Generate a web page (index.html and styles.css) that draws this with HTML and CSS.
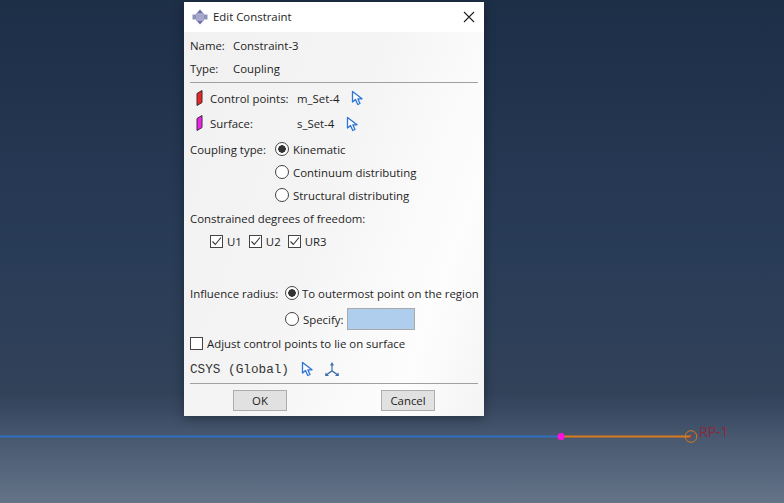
FILE: index.html
```html
<!DOCTYPE html>
<html lang="en">
<head>
<meta charset="utf-8">
<title>Edit Constraint</title>
<link rel="stylesheet" href="styles.css">
</head>
<body>
<main class="viewport">
  <svg class="model" width="784" height="503" viewBox="0 0 784 503" aria-hidden="true">
    <line x1="0" y1="436.500" x2="561" y2="436.500" stroke="#2f6fc0" stroke-width="2"/>
    <line x1="561" y1="436.500" x2="691" y2="436.500" stroke="#d87a1e" stroke-width="2"/>
    <circle cx="561" cy="436.500" r="3.500" fill="#ff10e0"/>
    <circle cx="691" cy="436.500" r="5.800" fill="none" stroke="#d87a1e" stroke-width="1"/>
    <line x1="687" y1="440" x2="695" y2="433" stroke="#b03030" stroke-width="1"/>
  </svg>
  <span class="rp-label">RP-1</span>

  <section class="dialog">
    <header class="titlebar">
      <svg class="app-icon" width="16" height="16" viewBox="0 0 16 16" aria-hidden="true">
        <path d="M8 .5 11.500 4.500H4.500Z" fill="#6f6fa8"/>
        <path d="M8 15.500 4.500 11.500H11.500Z" fill="#6f6fa8"/>
        <rect x=".5" y="5.500" width="15" height="5" fill="#8d93b8"/>
        <rect x="4" y="4" width="8" height="8" fill="#a4a6cc"/>
      </svg>
      <span class="title">Edit Constraint</span>
      <svg class="close" width="12" height="12" viewBox="0 0 12 12" aria-hidden="true">
        <path d="M1 1 11 11M11 1 1 11" stroke="#222" stroke-width="1.100" fill="none"/>
      </svg>
    </header>

    <div class="body">
      <div class="row name-row"><span class="key">Name:</span><span>Constraint-3</span></div>
      <div class="row type-row"><span class="key">Type:</span><span>Coupling</span></div>
      <hr class="rule">

      <div class="row region-row">
        <svg class="swatch" width="8" height="16" viewBox="0 0 8 16" aria-hidden="true"><path d="M2 3.500 7 .5V12.500L2 15.500Z" fill="#e8262a" stroke="#3c2a2a"/></svg>
        <span class="region-key">Control points:</span><span class="region-value">m_Set-4</span>
        <svg class="arrow" width="13" height="16" viewBox="0 0 13 16" aria-hidden="true"><path d="M1.500 1.500V12L4.500 9.500 6.800 14.500 9 13.500 6.800 8.800H11Z" fill="#fff" stroke="#2d74d6" stroke-width="1.300" stroke-linejoin="round"/></svg>
      </div>
      <div class="row surface-row">
        <svg class="swatch" width="8" height="16" viewBox="0 0 8 16" aria-hidden="true"><path d="M2 3.500 7 .5V12.500L2 15.500Z" fill="#ee22e8" stroke="#3c2a3c"/></svg>
        <span class="region-key">Surface:</span><span class="region-value">s_Set-4</span>
        <svg class="arrow arrow-low" width="13" height="16" viewBox="0 0 13 16" aria-hidden="true"><path d="M1.500 1.500V12L4.500 9.500 6.800 14.500 9 13.500 6.800 8.800H11Z" fill="#fff" stroke="#2d74d6" stroke-width="1.300" stroke-linejoin="round"/></svg>
      </div>

      <div class="row coupling-row">
        <span class="coupling-key">Coupling type:</span>
        <span class="radio on"></span><span>Kinematic</span>
      </div>
      <div class="row option-row"><span class="radio"></span><span>Continuum distributing</span></div>
      <div class="row option-row"><span class="radio"></span><span>Structural distributing</span></div>

      <div class="row dof-title">Constrained degrees of freedom:</div>
      <div class="row dof-row">
        <span class="check"><svg width="11" height="11" viewBox="0 0 11 11" aria-hidden="true"><path d="M1.500 5.500 4.300 8.500 10 1.500" stroke="#333" stroke-width="1.100" fill="none"/></svg></span><span class="dof-label">U1</span>
        <span class="check"><svg width="11" height="11" viewBox="0 0 11 11" aria-hidden="true"><path d="M1.500 5.500 4.300 8.500 10 1.500" stroke="#333" stroke-width="1.100" fill="none"/></svg></span><span class="dof-label">U2</span>
        <span class="check"><svg width="11" height="11" viewBox="0 0 11 11" aria-hidden="true"><path d="M1.500 5.500 4.300 8.500 10 1.500" stroke="#333" stroke-width="1.100" fill="none"/></svg></span><span class="dof-label">UR3</span>
      </div>

      <div class="row radius-row">
        <span class="radius-key">Influence radius:</span>
        <span class="radio on"></span><span>To outermost point on the region</span>
      </div>
      <div class="row specify-row">
        <span class="radio"></span><span class="specify-label">Specify:</span><span class="field"></span>
      </div>
      <div class="row adjust-row"><span class="check"></span><span>Adjust control points to lie on surface</span></div>
      <div class="row csys-row">
        <span class="csys">CSYS (Global)</span>
        <svg class="arrow" width="13" height="16" viewBox="0 0 13 16" aria-hidden="true"><path d="M1.500 1.500V12L4.500 9.500 6.800 14.500 9 13.500 6.800 8.800H11Z" fill="#fff" stroke="#2d74d6" stroke-width="1.300" stroke-linejoin="round"/></svg>
        <svg class="triad" width="16" height="16" viewBox="0 0 16 16" aria-hidden="true"><path d="M8 1 10 4.500H8.600V9.500L13.400 12.800 14.500 11.500 15 15H10.800L12.400 13.800 8 10.800 3.600 13.800 5.200 15H1L1.500 11.500 2.600 12.800 7.400 9.500V4.500H6Z" fill="#3f6fa8"/></svg>
      </div>
      <hr class="rule rule-low">
      <div class="buttons">
        <button class="btn" type="button">OK</button>
        <button class="btn" type="button">Cancel</button>
      </div>
    </div>
  </section>
</main>
</body>
</html>
```

FILE: styles.css
```css
* { box-sizing: border-box; }
html, body { margin: 0; padding: 0; }
body { width: 784px; height: 503px; overflow: hidden; }

.viewport {
  position: relative;
  width: 784px;
  height: 503px;
  overflow: hidden;
  background: linear-gradient(to bottom, #1d2e47 0%, #293c57 50%, #314259 78%, #3a4a63 82%, #48586f 87%, #647388 100%);
  font-family: "Open Sans", "Noto Sans", sans-serif;
  font-size: 11.400px;
  color: #1e1e1e;
}

.model { position: absolute; left: 0; top: 0; }

.rp-label {
  position: absolute;
  left: 699px;
  top: 422px;
  font-size: 14px;
  color: #8a2a3e;
}

.dialog {
  position: absolute;
  left: 184px;
  top: 2px;
  width: 300px;
  height: 414px;
  background: linear-gradient(110deg, #f1f1f1 0%, #f4f4f4 45%, #fdfdfd 80%, #f4f4f4 100%);
  box-shadow: 0 2px 10px rgba(0, 0, 0, .35);
}

.titlebar {
  height: 30px;
  background: #fff;
  display: flex;
  align-items: center;
  padding: 0 9px 1px 8px;
}
.app-icon { margin-right: 5px; }
.title { flex: 1; }

.body { padding: 0 6px; }

.row { display: flex; align-items: center; height: 20px; white-space: nowrap; }

.name-row { margin-top: 3px; }
.type-row { margin-top: 3px; }
.key { width: 43px; }

.rule { border: 0; border-top: 1px solid #a0a0a0; margin: 4px 0 0; height: 1px; }
.region-row { margin-top: 5px; }
.surface-row { margin-top: 5px; }
.swatch { margin: 0 7px 0 5px; }
.region-key { width: 87px; }
.region-value { margin-right: 12px; }
.arrow-low { margin-top: 2px; }

.coupling-row { margin-top: 6px; }
.coupling-key { width: 85px; }
.option-row { margin-top: 3px; padding-left: 85px; }

.radio {
  width: 14px;
  height: 14px;
  margin-right: 4px;
  border: 1px solid #444;
  border-radius: 50%;
  background: #fff;
  flex: none;
}
.radio.on { background: radial-gradient(circle, #333 0 3.500px, #fff 4px); }

.dof-title { margin-top: 3px; }
.dof-row { margin-top: 3px; padding-left: 20px; }
.check {
  width: 13px;
  height: 13px;
  border: 1px solid #444;
  background: #fff;
  flex: none;
  margin-right: 4px;
  display: flex;
  align-items: center;
  justify-content: center;
}
.dof-label { margin-right: 7px; }

.radius-row { margin-top: 32px; }
.radius-key { flex: none; width: 95px; }
.radius-row .radio { margin-right: 3px; }
.specify-row { margin-top: 5px; padding-left: 95px; height: 22px; }
.specify-label { margin-right: 3.500px; }
.field {
  width: 68px;
  height: 22px;
  background: #afcdec;
  border: 1px solid #a9a9a9;
}
.adjust-row { margin-top: 3px; }
.csys-row { margin-top: 6px; }
.csys {
  font-family: "Liberation Mono", monospace;
  font-size: 12.700px;
  color: #333;
  width: 111px;
}
.triad { margin-left: 10px; }
.rule-low { margin-top: 4px; }

.buttons { display: flex; justify-content: space-between; padding: 6px 43px 0; }
.btn {
  width: 54px;
  height: 21px;
  padding: 0;
  font: inherit;
  color: inherit;
  background: #e1e1e1;
  border: 1px solid #adadad;
}
```
